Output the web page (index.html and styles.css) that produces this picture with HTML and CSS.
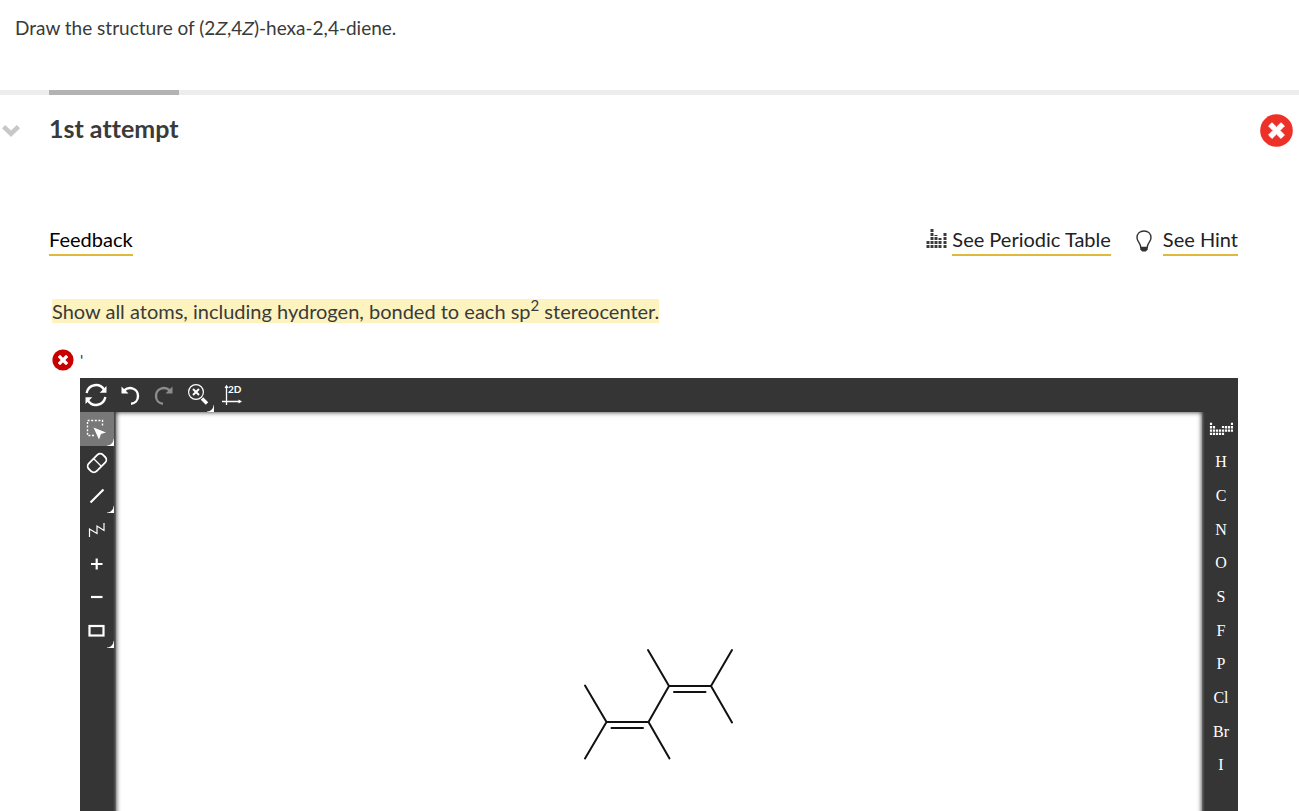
FILE: index.html
```html
<!DOCTYPE html>
<html lang="en">
<head>
    <meta charset="UTF-8">
    <meta name="viewport" content="width=device-width, initial-scale=1.0">
    <title>Hexa-2,4-diene</title>
    <link rel="stylesheet" href="styles.css">
</head>
<body>

    <!-- Question -->
    <p class="question">Draw the structure of (2<em>Z</em>,4<em>Z</em>)-hexa-2,4-diene.</p>

    <!-- Attempt header -->
    <header class="attempt">
        <button type="button" class="toggle" aria-label="Collapse attempt">
            <svg width="18" height="12" viewBox="0 0 18 12"><path d="M0 3.2L3.2 0 9 5.6 14.8 0 18 3.2 9 12z" fill="#c8c8c8"/></svg>
        </button>
        <h2>1st attempt</h2>
        <svg class="wrong" width="33" height="33" viewBox="0 0 33 33">
            <circle cx="16.5" cy="16.5" r="16.3" fill="#ee3128"/>
            <path d="M12 8.8L16.5 13.2 21 8.8 24.4 12 20 16.5 24.4 21 21 24.4 16.5 20 12 24.4 8.6 21 13 16.5 8.6 12z" fill="#fff" stroke="#fff" stroke-linejoin="round"/>
        </svg>
    </header>

    <!-- Attempt body -->
    <main class="content">
        <nav class="links">
            <a href="#" class="feedback">Feedback</a>
            <div class="help">
                <svg class="table-icon" width="21" height="20" viewBox="0 0 21 20">
                    <path d="M2 19V12M6 19V0M10 19V6M14 19V9M19 19V3" fill="none" stroke="#3a3a3a" stroke-width="3" stroke-dasharray="3 1"/>
                </svg>
                <a href="#">See Periodic Table</a>
                <svg class="bulb" width="16" height="22" viewBox="0 0 16 22">
                    <path d="M4.8 17.5C4.8 13.5 1 11.5 1 7.7 1 3.6 4 1 8 1s7 2.6 7 6.7c0 3.8-3.8 5.8-3.8 9.8z" fill="none" stroke="#333" stroke-width="1.4"/>
                    <path d="M4.3 17h7.4v2.5L9.8 21.5H6.2L4.3 19.5z" fill="#333"/>
                </svg>
                <a href="#">See Hint</a>
            </div>
        </nav>

        <p class="instruction"><mark>Show all atoms, including hydrogen, bonded to each sp<sup>2</sup> stereocenter.</mark></p>

        <div class="result">
            <svg width="22" height="22" viewBox="0 0 22 22">
                <circle cx="11" cy="11" r="10.6" fill="#c80000"/>
                <path d="M8 6L11 8.9 14 6 16 8 13.2 11 16 14 14 16 11 13.2 8 16 6 14 8.9 11 6 8z" fill="#fff" stroke="#fff" stroke-width=".5" stroke-linejoin="round"/>
            </svg>
            <span>'</span>
        </div>

        <!-- Structure editor -->
        <section class="editor">
            <div class="toolbar">
                <button type="button" aria-label="Refresh">
                    <svg width="24" height="24" viewBox="0 0 24 24">
                        <path d="M2.6 10C4.5 1 15.5-.5 20 6.5M21.4 14C19.5 23 8.5 24.5 4 17.5" fill="none" stroke="#fff" stroke-width="2.4"/>
                        <path d="M22.5 3V9.8H15.7zM1.5 21V14.2H8.3z" fill="#fff"/>
                    </svg>
                </button>
                <button type="button" aria-label="Undo">
                    <svg width="24" height="24" viewBox="0 0 24 24">
                        <path d="M6 7.5C12 2.5 20 6 20 13 20 17.5 17 20.5 13 20.7" fill="none" stroke="#fff" stroke-width="2.4"/>
                        <path d="M3.5 3.5V10.5H10.5z" fill="#fff"/>
                    </svg>
                </button>
                <button type="button" aria-label="Redo">
                    <svg width="24" height="24" viewBox="0 0 24 24">
                        <path d="M18 7.5C12 2.5 4 6 4 13 4 17.5 7 20.5 11 20.7" fill="none" stroke="#8c8c8c" stroke-width="2.4"/>
                        <path d="M20.5 3.5V10.5H13.5z" fill="#8c8c8c"/>
                    </svg>
                </button>
                <button type="button" class="more" aria-label="Zoom">
                    <svg width="24" height="24" viewBox="0 0 24 24">
                        <circle cx="10" cy="9" r="7.4" fill="none" stroke="#fff" stroke-width="1.2"/>
                        <path d="M7 6l6 6M13 6l-6 6" stroke="#fff" stroke-width="2"/>
                        <path d="M16 15.5l5 5" stroke="#fff" stroke-width="3.4"/>
                    </svg>
                </button>
                <button type="button" aria-label="Clean 2D">
                    <svg width="24" height="24" viewBox="0 0 24 24">
                        <path d="M6.5 3V22M2 18.5H20" fill="none" stroke="#fff" stroke-width="1.3"/>
                        <path d="M4.5 5L6.5 1.8 8.5 5zM18.5 16.5L22 18.5 18.5 20.5z" fill="#fff"/>
                        <text x="8" y="10" class="label-2d">2D</text>
                    </svg>
                </button>
            </div>

            <div class="workspace">
                <div class="tools">
                    <button type="button" class="more selected" aria-label="Select">
                        <svg width="24" height="24" viewBox="0 0 24 24">
                            <path d="M9 18.5H2.5V3.5H17.5V9" fill="none" stroke="#fff" stroke-width="1.4" stroke-dasharray="2 1.6"/>
                            <path d="M8.5 10.5L21 15.5 16 17 14 22.5z" fill="#fff"/>
                        </svg>
                    </button>
                    <button type="button" aria-label="Erase">
                        <svg width="24" height="24" viewBox="0 0 24 24">
                            <rect x="2" y="6.5" width="20" height="11" rx="4" transform="rotate(-45 12 12)" fill="none" stroke="#fff" stroke-width="1.8"/>
                            <path d="M8.5 7.5L16.5 15.5" stroke="#fff" stroke-width="1.3"/>
                        </svg>
                    </button>
                    <button type="button" class="more" aria-label="Single bond">
                        <svg width="24" height="24" viewBox="0 0 24 24"><path d="M5.5 18.5L18.5 5.5" stroke="#fff" stroke-width="2.2"/></svg>
                    </button>
                    <button type="button" aria-label="Chain">
                        <svg width="24" height="24" viewBox="0 0 24 24"><path d="M4.5 19V11L12 15.5V8L19 12.5V5" fill="none" stroke="#fff" stroke-width="1.2"/></svg>
                    </button>
                    <button type="button" aria-label="Increase charge">
                        <svg width="24" height="24" viewBox="0 0 24 24"><path d="M6 12H17.5M11.7 6.5V17.5" stroke="#fff" stroke-width="2.2"/></svg>
                    </button>
                    <button type="button" aria-label="Decrease charge">
                        <svg width="24" height="24" viewBox="0 0 24 24"><path d="M6 12H17.5" stroke="#fff" stroke-width="2.2"/></svg>
                    </button>
                    <button type="button" class="more" aria-label="Bracket">
                        <svg width="24" height="24" viewBox="0 0 24 24"><rect x="4.500" y="7" width="14" height="9.5" fill="none" stroke="#fff" stroke-width="2.2"/></svg>
                    </button>
                </div>

                <div class="canvas">
                    <svg class="molecule" width="152" height="114" viewBox="0 0 152 114">
                        <g fill="none" stroke="#111" stroke-width="2" stroke-linecap="round">
                            <path d="M2 37.5L23.5 74L2 110.5M23.5 74H65.5L86.5 110.5M65.5 74L86 38L65 2M86 38H128L149 2M128 38L149 74.5"/>
                            <path d="M28.5 80H60M91 44H122.5"/>
                        </g>
                    </svg>
                </div>

                <div class="atoms">
                    <button type="button" aria-label="Periodic table">
                        <svg width="24" height="14" viewBox="0 0 24 14">
                            <path d="M2 .8V14M5 4.1V14M8 7.4V14M11 7.4V14M14 7.4V14M17 4.1V10M20 4.1V10M23 .8V10M14 4.1V6" fill="none" stroke="#fff" stroke-width="2.2" stroke-dasharray="2.3 1"/>
                        </svg>
                    </button>
                    <button type="button">H</button>
                    <button type="button">C</button>
                    <button type="button">N</button>
                    <button type="button">O</button>
                    <button type="button">S</button>
                    <button type="button">F</button>
                    <button type="button">P</button>
                    <button type="button">Cl</button>
                    <button type="button">Br</button>
                    <button type="button">I</button>
                </div>
            </div>
        </section>
    </main>

</body>
</html>
```

FILE: styles.css
```css
* {
    margin: 0;
    padding: 0;
    box-sizing: border-box;
}

body {
    display: flex;
    flex-direction: column;
    min-height: 100vh;
    font-family: Lato, sans-serif;
    font-size: 20px;
    line-height: 24px;
    font-variant-ligatures: none;
    color: #3a3a3a;
    background: #fff;
}

svg {
    display: block;
    flex-shrink: 0;
}

button {
    border: none;
    background: none;
    cursor: pointer;
}

.question {
    padding: 16px 15px 50px;
    font-size: 19px;
}

.question em {
    font-family: "Liberation Sans", sans-serif;
    line-height: 0;
}

/* Attempt header */
.attempt {
    display: flex;
    align-items: center;
    border-top: 5px solid #ededed;
    padding-right: 6px;
}

.toggle {
    width: 49px;
    padding-left: 2px;
}

.attempt h2 {
    margin-top: -5px;
    padding: 21px 0 26px;
    border-top: 5px solid #b3b3b3;
    font-size: 25px;
    font-weight: bold;
}

.wrong {
    margin-left: auto;
}

/* Attempt body */
.content {
    flex: 1;
    display: flex;
    flex-direction: column;
    padding: 61px 61px 0 49px;
}

.links,
.help {
    display: flex;
    align-items: center;
}

.links {
    justify-content: space-between;
}

.links a {
    padding-bottom: 3px;
    border-bottom: 2px solid #dfb93c;
    color: #222;
    text-decoration: none;
}

.links .feedback {
    color: #000;
}

.table-icon {
    margin: 0 5px 5px 0;
}

.bulb {
    margin: 0 11px 2px 25px;
}

.instruction {
    margin-top: 43px;
    padding-left: 3px;
}

.instruction mark {
    background: #fdf3bf;
    color: inherit;
}

.instruction sup {
    font-size: 15px;
    line-height: 0;
}

.result {
    display: flex;
    align-items: center;
    gap: 6px;
    padding: 25px 3px 6px;
    font-size: 16px;
}

/* Structure editor */
.editor {
    flex: 1;
    display: flex;
    flex-direction: column;
    margin-left: 31px;
    background: #353535;
}

.toolbar {
    display: flex;
    gap: 2px;
    height: 34px;
}

.toolbar button,
.tools button,
.atoms button {
    position: relative;
    display: flex;
    align-items: center;
    justify-content: center;
}

.toolbar button {
    width: 32px;
}

.label-2d {
    fill: #fff;
    font-family: Lato, sans-serif;
    font-size: 10px;
    font-weight: bold;
}

.workspace {
    flex: 1;
    display: flex;
    overflow: hidden;
}

.tools,
.atoms {
    display: grid;
    grid-auto-rows: 1fr;
    width: 36px;
}

.tools {
    height: 236px;
    padding-right: 2px;
}

.atoms {
    height: 370px;
    padding-left: 2px;
}

.atoms button {
    color: #fff;
    font-family: "Liberation Serif", serif;
    font-size: 16px;
}

.selected {
    background: #787878;
}

/* Corner mark on buttons that open a menu */
.more::after {
    content: "";
    position: absolute;
    right: 0;
    bottom: 0;
    width: 7px;
    height: 7px;
    background: radial-gradient(circle at 0 0, transparent 6px, #fff 7px);
}

/* The bottom edge runs under the workspace so only three sides are shaded */
.canvas {
    flex: 1;
    display: flex;
    align-items: center;
    justify-content: center;
    margin-bottom: -6px;
    background: #fff;
    box-shadow: 0 0 3px #aaa, inset 0 0 5px #222;
}

.molecule {
    margin-top: 181px;
}
```
